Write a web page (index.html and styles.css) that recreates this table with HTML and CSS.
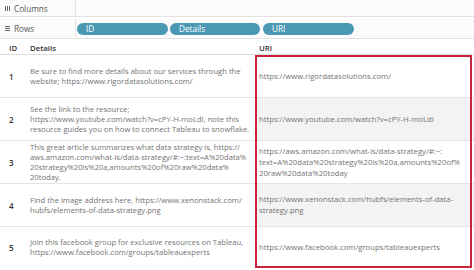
FILE: index.html
```html
<!DOCTYPE html>
<html>
<head>
<meta charset="utf-8">
<link rel="stylesheet" href="styles.css">
</head>
<body>
<div class="shelves">
  <div class="shelf shelf-cols">
    <div class="shelf-label">
      <svg class="ico" width="5" height="5" viewBox="0 0 5 5"><rect x="0" y="0" width="1" height="5" fill="#666"/><rect x="2" y="0" width="1" height="5" fill="#666"/><rect x="4" y="0" width="1" height="5" fill="#666"/></svg>
      <span>Columns</span>
    </div>
    <div class="shelf-body"></div>
  </div>
  <div class="shelf shelf-rows">
    <div class="shelf-label">
      <svg class="ico" width="5" height="5" viewBox="0 0 5 5"><rect x="0" y="0" width="5" height="1" fill="#666"/><rect x="0" y="2" width="5" height="1" fill="#666"/><rect x="0" y="4" width="5" height="1" fill="#666"/></svg>
      <span>Rows</span>
    </div>
    <div class="shelf-body">
      <span class="pill">ID</span>
      <span class="pill pill-details">Details</span>
      <span class="pill pill-uri">URI</span>
    </div>
  </div>
</div>

<div class="table">
  <div class="hd hd-id">ID</div>
  <div class="hd hd-details">Details</div>
  <div class="hd hd-uri">URI</div>

  <div class="c-id">1</div>
  <div class="c-det"><span>Be sure to find more details about our services through the</span><span>website; https://www.rigordatasolutions.com/</span></div>
  <div class="c-uri"><span>https://www.rigordatasolutions.com/</span></div>

  <div class="c-id">2</div>
  <div class="c-det"><span>See the link to the resource;</span><span>https://www.youtube.com/watch?v=cPY-H-moLdI, note this</span><span>resource guides you on how to connect Tableau to snowflake.</span></div>
  <div class="c-uri band"><span>https://www.youtube.com/watch?v=cPY-H-moLdI</span></div>

  <div class="c-id">3</div>
  <div class="c-det"><span>This great article summarizes what data strategy is, https://</span><span>aws.amazon.com/what-is/data-strategy/#:~:text=A%20data%</span><span>20strategy%20is%20a,amounts%20of%20raw%20data%</span><span>20today.</span></div>
  <div class="c-uri"><span>https://aws.amazon.com/what-is/data-strategy/#:~:</span><span>text=A%20data%20strategy%20is%20a,amounts%20of%</span><span>20raw%20data%20today</span></div>

  <div class="c-id">4</div>
  <div class="c-det"><span>Find the image address here, https://www.xenonstack.com/</span><span>hubfs/elements-of-data-strategy.png</span></div>
  <div class="c-uri band"><span>https://www.xenonstack.com/hubfs/elements-of-data-</span><span>strategy.png</span></div>

  <div class="c-id last">5</div>
  <div class="c-det last"><span>Join this facebook group for exclusive resources on Tableau,</span><span>https://www.facebook.com/groups/tableauexperts</span></div>
  <div class="c-uri last"><span>https://www.facebook.com/groups/tableauexperts</span></div>

  <div class="highlight"></div>
</div>
</body>
</html>
```

FILE: styles.css
```css
* { box-sizing: border-box; }
html, body { margin: 0; padding: 0; background: #ffffff; }
body {
  width: 474px;
  height: 270px;
  overflow: hidden;
  font-family: "Open Sans", "Noto Sans", sans-serif;
  color: #333;
}

.shelves { display: flex; flex-direction: column; }
.shelf {
  display: flex;
  border-bottom: 1px solid #e2e2e2;
  background: #fbfbfb;
}
.shelf-cols { height: 17px; }
.shelf-rows { height: 20px; margin-top: 2px; }
.shelf-label {
  width: 76px;
  flex: none;
  display: flex;
  align-items: center;
  gap: 4px;
  padding-left: 5px;
  border-right: 1px solid #e2e2e2;
  font-size: 8.2px;
  color: #555;
}
.ico { flex: none; }
.shelf-body {
  flex: 1;
  display: flex;
  align-items: center;
  padding-left: 1px;
  gap: 2px;
}
.pill {
  width: 91px;
  height: 12px;
  border-radius: 6px;
  background: #4a98b3;
  color: #fff;
  font-size: 8.2px;
  line-height: 12px;
  padding-left: 9px;
}
.pill-details { width: 90px; }
.pill-uri { margin-left: 1px; }

.table {
  position: relative;
  display: grid;
  grid-template-columns: 30px 225px 219px;
  grid-template-rows: 15px repeat(4, 43px) 40px;
  margin-top: 1px;
}
.hd {
  font-size: 7.8px;
  font-weight: 600;
  color: #333;
  border-bottom: 1px solid #dcdcdc;
  padding-top: 3px;
}
.hd-id { padding-left: 9px; }
.hd-uri { padding-left: 4px; }

.c-id, .c-det, .c-uri {
  display: flex;
  flex-direction: column;
  justify-content: center;
  color: #737373;
  white-space: nowrap;
}
.c-id, .c-det { border-bottom: 1px solid #e4e4e4; }
.c-id { padding-left: 9px; color: #333; font-size: 8px; font-weight: 600; }
.c-det { font-size: 7.65px; line-height: 10.2px; }
.c-uri { font-size: 7.7px; padding-left: 4px; line-height: 11px; border-bottom: 1px solid #e4e4e4; }
.c-id.last, .c-det.last, .c-uri.last { border-bottom: none; }
.band { background: #f3f3f3; }

.highlight {
  position: absolute;
  left: 255px;
  top: 15px;
  width: 217px;
  height: 213px;
  border: 2px solid #c8243f;
  pointer-events: none;
}
```
